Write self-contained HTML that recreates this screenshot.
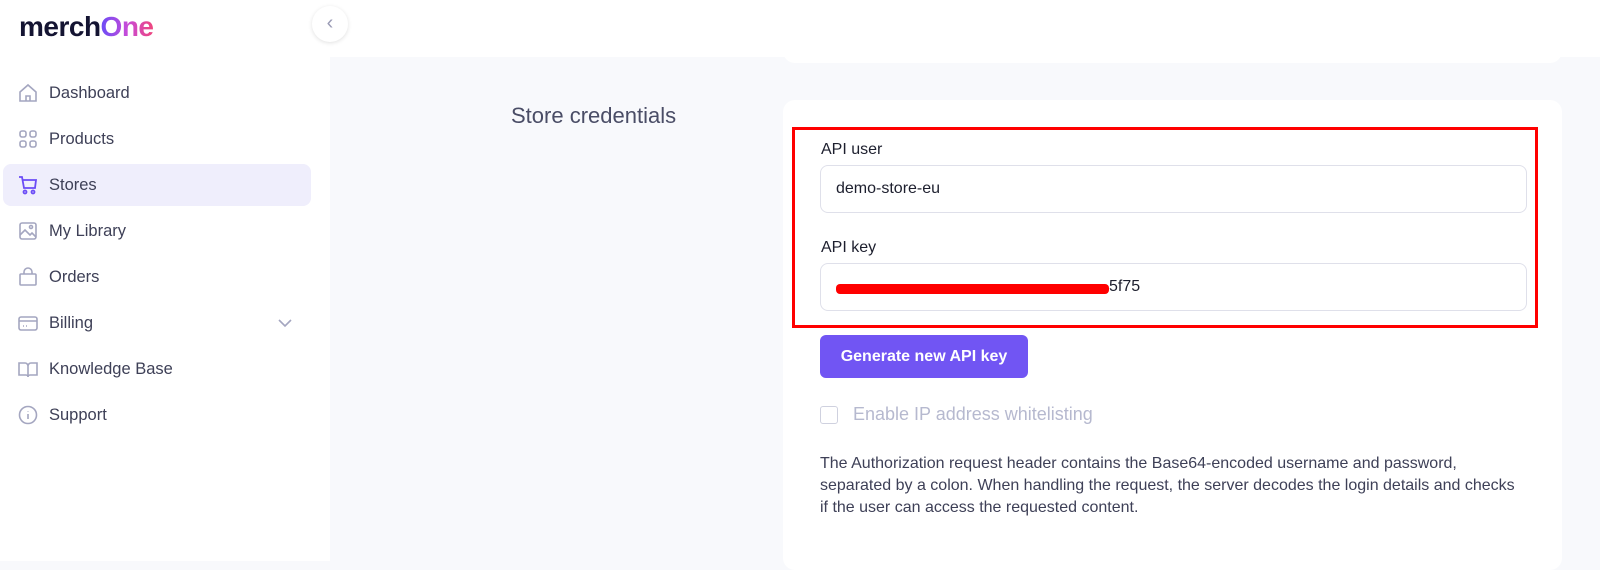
<!DOCTYPE html>
<html><head><meta charset="utf-8"><style>
*{box-sizing:border-box;margin:0;padding:0}
body{width:1600px;height:561px;overflow:hidden;background:#f8f9fc;font-family:"Liberation Sans",sans-serif;position:relative}
.side{position:absolute;left:0;top:0;width:330px;height:561px;background:#fff}
.top{position:absolute;left:330px;top:0;width:1270px;height:57px;background:#fff}
.logo{position:absolute;left:19px;top:11px;font-size:28px;font-weight:bold;color:#141432;letter-spacing:-0.5px}
.logo span{background:linear-gradient(90deg,#6b4cf6,#c84bd8,#f0457a);-webkit-background-clip:text;color:transparent}
.coll{position:absolute;left:312px;top:6px;width:36px;height:36px;border-radius:50%;background:#fff;box-shadow:0 1px 4px rgba(0,0,0,.12);color:#9a9bb5;font-size:20px;text-align:center;line-height:34px}
.nav{position:absolute;left:3px;width:308px;height:42px;border-radius:8px;font-size:16.5px;color:#3e4057;line-height:42px;padding-left:46px}
.nav.act{background:#efeefc}
.nav svg{position:absolute;left:15px;top:11px}
.card{position:absolute;background:#fff;border-radius:12px}
.h{position:absolute;left:511px;top:103px;font-size:22px;color:#4a4d66}
.lbl{position:absolute;left:821px;font-size:16px;color:#1d1f2e}
.inp{position:absolute;left:820px;width:707px;height:48px;border:1px solid #dfe0ea;border-radius:8px;font-size:16px;color:#1d1f2e;padding-left:15px;line-height:46px}
.red{position:absolute;left:792px;top:127px;width:746px;height:201px;border:3px solid #f00}
.btn{position:absolute;left:820px;top:335px;width:208px;height:43px;background:#7155f3;border-radius:6px;color:#fff;font-weight:bold;font-size:16px;text-align:center;line-height:43px}
.chk{position:absolute;left:820px;top:406px;width:18px;height:18px;border:1px solid #cfd1df;border-radius:3px}
.chkl{position:absolute;left:853px;top:404px;font-size:18px;color:#b6b9cf}
.p{position:absolute;left:820px;top:453px;width:705px;font-size:16px;line-height:22px;color:#3e4057}
</style></head><body>
<div class="side"></div><div class="top"></div>
<div class="logo">merch<span>One</span></div>
<div class="coll">&#8249;</div>
<div class="nav" style="top:72px"><svg width="20" height="20" viewBox="0 0 20 20" fill="none" stroke="#a4a6c0" stroke-width="1.6"><path d="M2 9L10 2l8 7v9H2z"/><path d="M8 18v-5h4v5"/></svg>Dashboard</div>
<div class="nav" style="top:118px"><svg width="20" height="20" viewBox="0 0 20 20" fill="none" stroke="#a4a6c0" stroke-width="1.6"><rect x="2" y="2" width="6" height="6" rx="2"/><rect x="12" y="2" width="6" height="6" rx="2"/><rect x="2" y="12" width="6" height="6" rx="2"/><rect x="12" y="12" width="6" height="6" rx="2"/></svg>Products</div>
<div class="nav act" style="top:164px"><svg width="20" height="20" viewBox="0 0 20 20" fill="none" stroke="#6b4cf6" stroke-width="1.8"><path d="M1 2h3l2 11h11l1-8H5"/><circle cx="7" cy="17" r="1.5"/><circle cx="15" cy="17" r="1.5"/></svg>Stores</div>
<div class="nav" style="top:210px"><svg width="20" height="20" viewBox="0 0 20 20" fill="none" stroke="#a4a6c0" stroke-width="1.6"><rect x="2" y="2" width="16" height="16" rx="2"/><path d="M2 14l5-5 5 5 2-2 4 4"/><circle cx="13" cy="6" r="1.5"/></svg>My Library</div>
<div class="nav" style="top:256px"><svg width="20" height="20" viewBox="0 0 20 20" fill="none" stroke="#a4a6c0" stroke-width="1.6"><rect x="2" y="7" width="16" height="11" rx="1"/><path d="M6 7V5a4 4 0 018 0v2"/></svg>Orders</div>
<div class="nav" style="top:302px"><svg width="20" height="20" viewBox="0 0 20 20" fill="none" stroke="#a4a6c0" stroke-width="1.6"><rect x="1" y="4" width="18" height="13" rx="2"/><path d="M1 8h18"/><path d="M5 13h1M8 13h1"/></svg>Billing<svg style="left:274px;top:16px" width="16" height="10" viewBox="0 0 16 10" fill="none" stroke="#a4a6c0" stroke-width="1.6"><path d="M2 2l6 6 6-6"/></svg></div>
<div class="nav" style="top:348px"><svg width="20" height="20" viewBox="0 0 20 20" fill="none" stroke="#a4a6c0" stroke-width="1.6"><path d="M1 4h6a3 3 0 013 3v11a2 2 0 00-2-2H1zM19 4h-6a3 3 0 00-3 3v11a2 2 0 012-2h7z"/></svg>Knowledge Base</div>
<div class="nav" style="top:394px"><svg width="20" height="20" viewBox="0 0 20 20" fill="none" stroke="#a4a6c0" stroke-width="1.6"><circle cx="10" cy="10" r="8.5"/><path d="M10 9v5M10 6v.5"/></svg>Support</div>
<div class="card" style="left:783px;top:0;width:779px;height:63px;border-radius:0 0 12px 12px"></div>
<div class="card" style="left:783px;top:100px;width:779px;height:470px"></div>
<div class="h">Store credentials</div>
<div class="lbl" style="top:141px">API user</div>
<div class="inp" style="top:165px">demo-store-eu</div>
<div class="lbl" style="top:239px">API key</div>
<div class="inp" style="top:263px"><span style="position:absolute;left:15px;top:20px;width:273px;height:10px;background:#f00;border-radius:4px"></span><span style="position:absolute;left:288px;top:0">5f75</span></div>
<div class="red"></div>
<div class="btn">Generate new API key</div>
<div class="chk"></div><div class="chkl">Enable IP address whitelisting</div>
<div class="p">The Authorization request header contains the Base64-encoded username and password, separated by a colon. When handling the request, the server decodes the login details and checks if the user can access the requested content.</div>
</body></html>
